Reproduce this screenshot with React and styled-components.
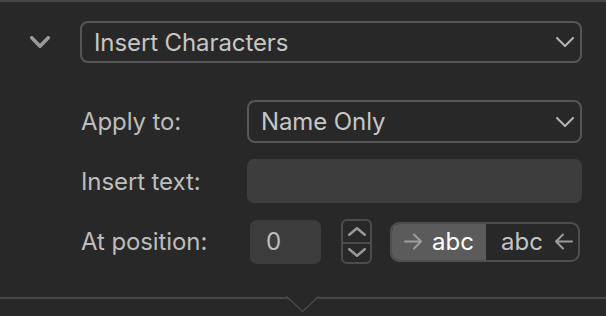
import React from 'react'
import styled, { createGlobalStyle } from 'styled-components'

const Global = createGlobalStyle`
  html, body {
    margin: 0;
    padding: 0;
    background: #282828;
  }
  * { box-sizing: border-box; }
`

const Panel = styled.div`
  position: relative;
  width: 606px;
  height: 316px;
  background: #282828;
  border-top: 2px solid #474747;
  padding-top: 19px;
  font-family: Inter, "Liberation Sans", sans-serif;
  font-size: 24px;
  color: #c3c3c3;
  overflow: hidden;
`

const Header = styled.div`
  display: grid;
  grid-template-columns: 80px 1fr;
  align-items: center;
  padding-right: 24px;
`

const Toggle = styled.div`
  display: flex;
  justify-content: center;
  align-items: center;
  padding-right: 1px;
`

const Select = styled.div`
  display: flex;
  align-items: center;
  justify-content: space-between;
  height: ${p => p.h || 42}px;
  border: 2px solid #565656;
  border-radius: 8px;
  padding: 0 6px 0 12px;
  color: #c6c6c6;
  letter-spacing: -0.1px;
`

const Form = styled.div`
  display: grid;
  grid-template-columns: 167px 1fr;
  grid-auto-rows: auto;
  row-gap: 16px;
  align-items: center;
  margin: 37px 24px 0 80px;
`

const Label = styled.div`
  color: #bdbdbd;
  padding-left: 1px;
  letter-spacing: -0.1px;
`

const Field = styled.div`
  height: 44px;
  background: #3d3d3d;
  border-radius: 7px;
`

const PositionRow = styled.div`
  display: flex;
  align-items: center;
`

const NumberField = styled.div`
  width: 71px;
  height: 44px;
  margin-left: 3px;
  background: #3c3c3c;
  border-radius: 7px;
  padding-left: 16px;
  display: flex;
  align-items: center;
  color: #bdbdbd;
`

const Stepper = styled.div`
  width: 31px;
  height: 45px;
  margin-left: 20px;
  border: 2px solid #4c4c4c;
  border-radius: 6px;
  display: grid;
  grid-template-rows: 1fr 1fr;
  & > div + div { border-top: 2px solid #4c4c4c; }
`

const StepHalf = styled.div`
  display: flex;
  align-items: center;
  justify-content: center;
`

const Segmented = styled.div`
  display: flex;
  width: 190px;
  height: 40px;
  margin-left: 18px;
  border: 2px solid #4f4f4f;
  border-radius: 9px;
  overflow: hidden;
`

const Segment = styled.div`
  flex: ${p => (p.active ? '0 0 94px' : '1')};
  display: flex;
  align-items: center;
  justify-content: center;
  gap: ${p => (p.active ? 9 : 11)}px;
  padding-left: ${p => (p.active ? 0 : 10)}px;
  background: ${p => (p.active ? '#5b5b5b' : 'transparent')};
  color: ${p => (p.active ? '#ffffff' : '#c3c3c3')};
  padding-bottom: 1px;
`

const Footer = styled.div`
  position: absolute;
  left: 0;
  right: 0;
  top: 295px;
  height: 2px;
  background: #474747;
`

const Notch = styled.svg`
  position: absolute;
  left: 286px;
  top: -1px;
`

const Chevron = ({ w, h, stroke, color, up }) => (
  <svg width={w} height={h} viewBox={`0 0 ${w} ${h}`} fill="none">
    <path
      d={up
        ? `M${stroke / 2} ${h - stroke / 2} L${w / 2} ${stroke / 2} L${w - stroke / 2} ${h - stroke / 2}`
        : `M${stroke / 2} ${stroke / 2} L${w / 2} ${h - stroke / 2} L${w - stroke / 2} ${stroke / 2}`}
      stroke={color}
      strokeWidth={stroke}
      strokeLinecap="round"
      strokeLinejoin="round"
    />
  </svg>
)

const Arrow = ({ left }) => (
  <svg width="19" height="17" viewBox="0 0 19 17" fill="none">
    <path
      d={left ? 'M18 8.5 H2 M9 1.5 L2 8.5 L9 15.5' : 'M1 8.5 H17 M10 1.5 L17 8.5 L10 15.5'}
      stroke="#9d9d9d"
      strokeWidth="2"
      strokeLinecap="round"
      strokeLinejoin="round"
    />
  </svg>
)

export default function App() {
  return (
    <>
      <Global />
      <Panel>
        <Header>
          <Toggle>
            <Chevron w={20} h={12} stroke={3.5} color="#9a9a9a" />
          </Toggle>
          <Select>
            Insert Characters
            <Chevron w={18} h={10} stroke={2} color="#b5b5b5" />
          </Select>
        </Header>

        <Form>
          <Label>Apply to:</Label>
          <Select h={43}>
            Name Only
            <Chevron w={18} h={10} stroke={2} color="#b5b5b5" />
          </Select>

          <Label>Insert text:</Label>
          <Field />

          <Label>At position:</Label>
          <PositionRow>
            <NumberField>0</NumberField>
            <Stepper>
              <StepHalf>
                <Chevron w={18} h={9} stroke={2.5} color="#999" up />
              </StepHalf>
              <StepHalf>
                <Chevron w={18} h={9} stroke={2.5} color="#999" />
              </StepHalf>
            </Stepper>
            <Segmented>
              <Segment active>
                <Arrow />
                abc
              </Segment>
              <Segment>
                abc
                <Arrow left />
              </Segment>
            </Segmented>
          </PositionRow>
        </Form>

        <Footer>
          <Notch width="33" height="17" viewBox="0 0 33 17">
            <path d="M0 1 H1 L16.5 15.5 L32 1 H33" stroke="#474747" strokeWidth="1.6" fill="#282828" />
          </Notch>
        </Footer>
      </Panel>
    </>
  )
}
